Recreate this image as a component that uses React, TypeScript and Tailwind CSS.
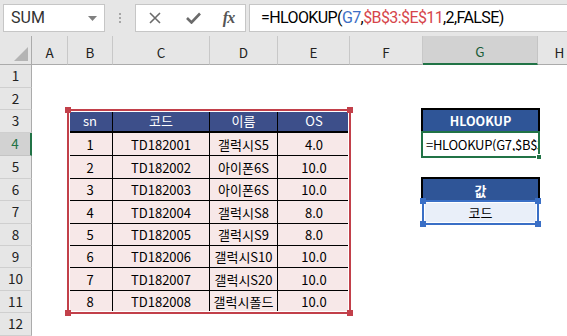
import React from 'react';

const data = [
  ['1', 'TD182001', '갤럭시S5', '4.0'],
  ['2', 'TD182002', '아이폰6S', '10.0'],
  ['3', 'TD182003', '아이폰6S', '10.0'],
  ['4', 'TD182004', '갤럭시S8', '8.0'],
  ['5', 'TD182005', '갤럭시S9', '8.0'],
  ['6', 'TD182006', '갤럭시S10', '10.0'],
  ['7', 'TD182007', '갤럭시S20', '10.0'],
  ['8', 'TD182008', '갤럭시폴드', '10.0'],
];

const rowHeads = [
  { n: 1, cls: 'row-start-2' },
  { n: 2, cls: 'row-start-3' },
  { n: 3, cls: 'row-start-4' },
  { n: 4, cls: 'row-start-5', active: true },
  { n: 5, cls: 'row-start-6' },
  { n: 6, cls: 'row-start-7' },
  { n: 7, cls: 'row-start-8' },
  { n: 8, cls: 'row-start-9' },
  { n: 9, cls: 'row-start-10' },
  { n: 10, cls: 'row-start-11' },
  { n: 11, cls: 'row-start-12' },
  { n: 12, cls: 'row-start-13' },
];

const colHeads = ['A', 'B', 'C', 'D', 'E', 'F', 'G', 'H'];

function Handle({ pos, color }: { pos: string; color: string }) {
  return <div className={`absolute w-[6px] h-[6px] ${pos} ${color}`} />;
}

function FormulaBar() {
  return (
    <div className="h-[36px] flex items-center bg-[#e6e6e6]">
      {/* name box */}
      <div className="ml-[3px] w-[102px] h-[28px] bg-white border border-[#c6c6c6] flex items-center justify-between pl-[7px] pr-[7px]">
        <span className="text-[16px] text-[#333] font-['Roboto',sans-serif]">SUM</span>
        <svg width="9" height="5" viewBox="0 0 9 5">
          <path d="M0 0 L9 0 L4.5 5 Z" fill="#808080" />
        </svg>
      </div>
      <div className="w-[30px] flex flex-col items-center gap-[2px]">
        <div className="w-[2px] h-[2px] bg-[#a6a6a6]" />
        <div className="w-[2px] h-[2px] bg-[#a6a6a6]" />
        <div className="w-[2px] h-[2px] bg-[#a6a6a6]" />
      </div>
      {/* buttons */}
      <div className="w-[111px] h-[28px] bg-white border border-[#c6c6c6] flex items-center">
        <div className="w-[38px] flex justify-center">
          <svg width="12" height="12" viewBox="0 0 12 12">
            <path d="M1 1 L11 11 M11 1 L1 11" stroke="#6b6b6b" strokeWidth="1.6" />
          </svg>
        </div>
        <div className="w-[38px] flex justify-center">
          <svg width="15" height="12" viewBox="0 0 15 12">
            <path d="M1 6 L5.5 10.5 L14 1.5" stroke="#6b6b6b" strokeWidth="2.6" fill="none" />
          </svg>
        </div>
        <div className="flex-1 flex justify-center">
          <span className="text-[16px] italic font-bold text-[#555] font-['Liberation_Serif',serif] tracking-[-1px]">fx</span>
        </div>
      </div>
      {/* formula input */}
      <div className="ml-[3px] flex-1 h-[28px] bg-white border border-[#c6c6c6] border-r-0 flex items-center pl-[11px] overflow-hidden whitespace-nowrap">
        <span className="text-[16px] text-black font-['Roboto',sans-serif] tracking-[-0.6px]">
          =HLOOKUP(<span className="text-[#3d6fc5]">G7</span>,
          <span className="text-[#d6454b]">$B$3:$E$11</span>,2,FALSE)
        </span>
      </div>
    </div>
  );
}

export default function App() {
  return (
    <div className="w-[567px] h-[336px] overflow-hidden bg-white font-['Noto_Sans_CJK_KR','Noto_Sans',sans-serif] text-[13px] text-black leading-none">
      <FormulaBar />
      <div className="grid grid-cols-[32px_36px_45px_97px_68px_72px_73px_115px_44px] grid-rows-[29px_23px_22px_23px_23px_23px_22px_23px_22px_22px_23px_22px_23px]">
        {/* corner */}
        <div className="row-start-1 col-start-1 bg-[#e6e6e6] border-r border-b border-[#ababab] relative">
          <svg className="absolute right-[3px] bottom-[3px]" width="14" height="14" viewBox="0 0 14 14">
            <path d="M14 0 L14 14 L0 14 Z" fill="#b4b4b4" />
          </svg>
        </div>
        {colHeads.map((c) =>
          c === 'G' ? (
            <div
              key={c}
              className="row-start-1 bg-[#d2d2d2] border-r border-[#c4c4c4] border-b-2 border-b-[#217346] flex items-center justify-center pt-[5px] text-[13.5px] text-[#185c37]"
            >
              {c}
            </div>
          ) : (
            <div
              key={c}
              className="row-start-1 bg-[#e6e6e6] border-r border-[#c8c8c8] border-b border-b-[#ababab] flex items-center justify-center pt-[5px] text-[13.5px] text-[#222]"
            >
              {c}
            </div>
          )
        )}

        {/* row headers */}
        {rowHeads.map((r) =>
          r.active ? (
            <div
              key={r.n}
              className={`${r.cls} col-start-1 bg-[#d2d2d2] border-b border-[#c4c4c4] border-r-2 border-r-[#217346] flex items-center justify-center text-[13.5px] text-[#217346]`}
            >
              {r.n}
            </div>
          ) : (
            <div
              key={r.n}
              className={`${r.cls} col-start-1 bg-[#e6e6e6] border-b border-[#cfcfcf] border-r border-r-[#ababab] flex items-center justify-center text-[13.5px] text-[#222]`}
            >
              {r.n}
            </div>
          )
        )}

        {/* table B3:E11 */}
        <div className="col-start-3 col-end-7 row-start-4 row-end-13 relative">
          <div className="h-full grid grid-cols-[45px_97px_68px_72px] grid-rows-[23px_23px_23px_22px_23px_22px_22px_23px_22px]">
            {['sn', '코드', '이름', 'OS'].map((h, i) => (
              <div
                key={h}
                className={`bg-[#3d4f8a] text-white border-b-2 border-black flex items-center justify-center ${i < 3 ? 'border-r border-r-black' : ''}`}
              >
                {h}
              </div>
            ))}
            {data.map((row) =>
              row.map((v, i) => (
                <div
                  key={row[0] + i}
                  className={`bg-[#f7e8e8] border-b border-black flex items-center justify-center whitespace-nowrap ${i < 3 ? 'border-r border-r-black' : ''}`}
                >
                  {v}
                </div>
              ))
            )}
          </div>
          {/* reference highlight */}
          <div className="absolute -inset-[1px] border-2 border-[#c2404a] shadow-[inset_0_0_0_1px_white] pointer-events-none" />
          <Handle pos="-left-[3px] -top-[3px]" color="bg-[#c2404a]" />
          <Handle pos="-right-[3px] -top-[3px]" color="bg-[#c2404a]" />
          <Handle pos="-left-[3px] -bottom-[3px]" color="bg-[#c2404a]" />
          <Handle pos="-right-[3px] -bottom-[3px]" color="bg-[#c2404a]" />
        </div>

        {/* G3 */}
        <div className="col-start-8 row-start-4 relative bg-[#2f5597] text-white text-[12.5px] font-bold flex items-center justify-center">
          <div className="absolute -inset-[2px] border-2 border-black" />
          <span className="relative">HLOOKUP</span>
        </div>
        {/* G4 active cell */}
        <div className="col-start-8 row-start-5 relative bg-white flex items-center">
          <span className="pl-[3px] overflow-hidden whitespace-nowrap w-full tracking-[-0.3px]">=HLOOKUP(G7,$B$3:$E$11,2,FALSE)</span>
          <div className="absolute -inset-[2px] border-2 border-[#217346]" />
          <div className="absolute -right-[4px] -bottom-[4px] w-[6px] h-[6px] bg-[#217346] border border-white" />
        </div>
        {/* G6 */}
        <div className="col-start-8 row-start-7 relative bg-[#2f5597] text-white font-bold flex items-center justify-center">
          <div className="absolute -inset-[2px] border-2 border-black" />
          <span className="relative">값</span>
        </div>
        {/* G7 */}
        <div className="col-start-8 row-start-8 relative bg-[#e9eff9] flex items-center justify-center">
          <span>코드</span>
          <div className="absolute -inset-[1px] border-2 border-[#3a6fc6] shadow-[inset_0_0_0_1px_white]" />
          <Handle pos="-left-[3px] -top-[3px]" color="bg-[#3a6fc6]" />
          <Handle pos="-right-[3px] -top-[3px]" color="bg-[#3a6fc6]" />
          <Handle pos="-left-[3px] -bottom-[3px]" color="bg-[#3a6fc6]" />
          <Handle pos="-right-[3px] -bottom-[3px]" color="bg-[#3a6fc6]" />
        </div>
      </div>
    </div>
  );
}
